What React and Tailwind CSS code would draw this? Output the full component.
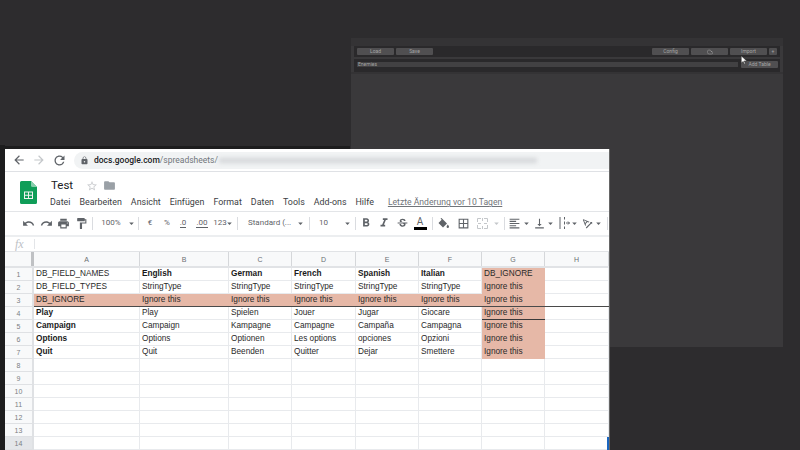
import {
  MdArrowBack,
  MdArrowForward,
  MdRefresh,
  MdLock,
  MdStarBorder,
  MdFolder,
  MdUndo,
  MdRedo,
  MdPrint,
  MdFormatPaint,
  MdArrowDropDown,
  MdFormatBold,
  MdFormatItalic,
  MdStrikethroughS,
  MdBorderAll,
  MdFormatAlignLeft,
  MdVerticalAlignBottom,
  MdTextRotationAngleup,
} from "react-icons/md";
import { FiCloud } from "react-icons/fi";

const columns = [
  { name: "A", w: "w-[106px]" },
  { name: "B", w: "w-[89px]" },
  { name: "C", w: "w-[63px]" },
  { name: "D", w: "w-[64px]" },
  { name: "E", w: "w-[63px]" },
  { name: "F", w: "w-[63px]" },
  { name: "G", w: "w-[63px]" },
  { name: "H", w: "w-[64px]" },
];

const rows = [
  ["DB_FIELD_NAMES", "English", "German", "French", "Spanish", "Italian", "DB_IGNORE", ""],
  ["DB_FIELD_TYPES", "StringType", "StringType", "StringType", "StringType", "StringType", "Ignore this", ""],
  ["DB_IGNORE", "Ignore this", "Ignore this", "Ignore this", "Ignore this", "Ignore this", "Ignore this", ""],
  ["Play", "Play", "Spielen", "Jouer", "Jugar", "Giocare", "Ignore this", ""],
  ["Campaign", "Campaign", "Kampagne", "Campagne", "Campaña", "Campagna", "Ignore this", ""],
  ["Options", "Options", "Optionen", "Les options", "opciones", "Opzioni", "Ignore this", ""],
  ["Quit", "Quit", "Beenden", "Quitter", "Dejar", "Smettere", "Ignore this", ""],
  ["", "", "", "", "", "", "", ""],
  ["", "", "", "", "", "", "", ""],
  ["", "", "", "", "", "", "", ""],
  ["", "", "", "", "", "", "", ""],
  ["", "", "", "", "", "", "", ""],
  ["", "", "", "", "", "", "", ""],
  ["", "", "", "", "", "", "", ""],
];

function UnityButton({ children, className }) {
  return (
    <div
      className={`h-[7px] shrink-0 flex items-center justify-center rounded-[1px] bg-[#504f51] text-[5px] leading-none text-[#a5a5a5] ${className}`}
    >
      {children}
    </div>
  );
}

function UnityPanel() {
  return (
    <div className="absolute left-[351px] top-[38px] w-[432px] h-[309px] bg-[#3a393b]">
      <div className="h-[8px] bg-[#343335]" />
      <div className="mx-[3px] h-[11px] bg-[#2a292b] flex items-center px-[3px] gap-[2px]">
        <UnityButton className="w-[37px]">Load</UnityButton>
        <UnityButton className="w-[37px]">Save</UnityButton>
        <div className="flex-1" />
        <UnityButton className="w-[37px]">Config</UnityButton>
        <UnityButton className="w-[37px]">
          <FiCloud className="text-[6px]" />
        </UnityButton>
        <UnityButton className="w-[37px]">Import</UnityButton>
        <UnityButton className="w-[8px]">+</UnityButton>
      </div>
      <div className="mx-[3px] mt-[2px] h-[13px] bg-[#2a292b] flex items-start pt-[2px] pl-[3px] gap-[3px]">
        <div className="w-[381px] h-[5px] mt-px shrink-0 bg-[#424143] flex items-center px-[1px] text-[5px] leading-none text-[#a5a5a5]">
          Enemies
        </div>
        <UnityButton className="w-[37px]">Add Table</UnityButton>
      </div>
      <div className="h-[2px] bg-[#343335]" />
      {/* cursor */}
      <svg className="absolute left-[390px] top-[18px] w-[6px] h-[8px]" viewBox="0 0 6 9">
        <path d="M0 0v8l2-2 1.5 3 1-.5L3 5.5h3z" fill="#fff" stroke="#222" strokeWidth="0.4" />
      </svg>
    </div>
  );
}

function AddressBar() {
  return (
    <div className="h-[23px] flex items-center border-b border-[#dfe1e5] bg-white">
      <MdArrowBack className="ml-[7px] text-[14px] text-[#5f6368]" />
      <MdArrowForward className="ml-[6px] text-[14px] text-[#c4c7ca]" />
      <MdRefresh className="ml-[6px] text-[15px] text-[#5f6368]" />
      <div className="ml-[7px] flex-1 h-[17px] rounded-l-full bg-[#f1f3f4] flex items-center pl-[6px]">
        <MdLock className="text-[9px] text-[#5f6368]" />
        <span className="ml-[5px] text-[8.5px] font-medium leading-none text-[#202124]">docs.google.com</span>
        <span className="text-[8.5px] leading-none text-[#70757a]">/spreadsheets/</span>
        <div className="ml-[1px] w-[318px] h-[5px] bg-[#d4d6d9] blur-[2px]" />
      </div>
    </div>
  );
}

function SheetsLogo() {
  return (
    <svg className="w-[17px] h-[23px]" viewBox="0 0 17 23">
      <path d="M1.5 0H11l6 6v15.5a1.5 1.5 0 0 1-1.5 1.5h-14A1.5 1.5 0 0 1 0 21.500V1.500A1.500 1.500 0 0 1 1.500 0z" fill="#0f9d58" />
      <path d="M11 0l6 6h-4.500A1.500 1.500 0 0 1 11 4.500z" fill="#87ceac" />
      <path d="M4 10.500h9V18H4zM5 11.500v2.200h3v-2.200zm4 0v2.200h3v-2.200zM5 14.700V17h3v-2.300zm4 0V17h3v-2.300z" fill="#f1f1f1" fillRule="evenodd" />
    </svg>
  );
}

function TitleBar() {
  const menu = ["Datei", "Bearbeiten", "Ansicht", "Einfügen", "Format", "Daten", "Tools", "Add-ons", "Hilfe"];
  return (
    <div className="h-[40px] flex bg-white border-b border-[#e3e5e8]">
      <div className="ml-[15px] mt-[9px]">
        <SheetsLogo />
      </div>
      <div className="ml-[13px] pt-[5px]">
        <div className="flex items-center h-[17px] pl-[1px]">
          <span className="text-[11.5px] leading-none text-[#202124]">Test</span>
          <MdStarBorder className="ml-[13px] text-[12px] text-[#c9cbce]" />
          <MdFolder className="ml-[5px] text-[13px] text-[#9aa0a6]" />
        </div>
        <div className="flex items-center h-[15px] mt-[1px] gap-[9px] text-[8.9px] leading-none text-[#3c4043] whitespace-nowrap">
          {menu.map((m) => (
            <span key={m}>{m}</span>
          ))}
          <span className="ml-[5px] text-[8.65px] underline text-[#70757a]">Letzte Änderung vor 10 Tagen</span>
        </div>
      </div>
    </div>
  );
}

// toolbar items sit in fixed width slots, the widths come from the reference
function Slot({ w, children, className = "" }) {
  return <div className={`${w} shrink-0 flex items-center justify-center ${className}`}>{children}</div>;
}

function Sep({ w }) {
  return (
    <Slot w={w}>
      <div className="w-px h-[13px] shrink-0 bg-[#dadce0]" />
    </Slot>
  );
}

function Caret({ w, light }) {
  return (
    <Slot w={w}>
      <MdArrowDropDown className={`shrink-0 text-[11px] ${light ? "text-[#c4c7ca]" : "text-[#5f6368]"}`} />
    </Slot>
  );
}

function Toolbar() {
  return (
    <div className="h-[25px] pb-[1px] flex items-center bg-white border-b-2 border-[#eceef0] text-[#5f6368] text-[8px] leading-none whitespace-nowrap overflow-hidden">
      <div className="w-[14px] shrink-0" />
      <Slot w="w-[18px]"><MdUndo className="text-[13px]" /></Slot>
      <Slot w="w-[18px]"><MdRedo className="text-[13px]" /></Slot>
      <Slot w="w-[17px]"><MdPrint className="text-[13px]" /></Slot>
      <Slot w="w-[18px]"><MdFormatPaint className="text-[13px]" /></Slot>
      <Sep w="w-[4px]" />
      <Slot w="w-[34px]">100%</Slot>
      <Caret w="w-[6px]" />
      <Sep w="w-[8px]" />
      <Slot w="w-[16px]">€</Slot>
      <Slot w="w-[18px]">%</Slot>
      <Slot w="w-[14px]"><span className="border-b border-[#5f6368]">.0</span></Slot>
      <Slot w="w-[24px]"><span className="border-b border-[#5f6368]">.00</span></Slot>
      <Slot w="w-[12px]">123</Slot>
      <Caret w="w-[6px]" />
      <Sep w="w-[10px]" />
      <Slot w="w-[54px]" className="pl-[6px] !justify-start">Standard (...</Slot>
      <Caret w="w-[8px]" />
      <Sep w="w-[10px]" />
      <Slot w="w-[27px]" className="pl-[5px] !justify-start">10</Slot>
      <Caret w="w-[12px]" />
      <Sep w="w-[4px]" />
      <Slot w="w-[18px]"><MdFormatBold className="text-[14px]" /></Slot>
      <Slot w="w-[18px]"><MdFormatItalic className="text-[14px]" /></Slot>
      <Slot w="w-[18px]"><MdStrikethroughS className="text-[13px]" /></Slot>
      <Slot w="w-[18px]">
        <div className="flex flex-col items-center w-[13px]">
          <span className="text-[10px] leading-[10px]">A</span>
          <div className="w-[13px] h-[3px] bg-black" />
        </div>
      </Slot>
      <Sep w="w-[6px]" />
      <Slot w="w-[18px]">
        <svg className="w-[12px] h-[11px]" viewBox="0 0 12 11" fill="#5f6368">
          <path d="M2.500 0.500l1-.5 5.500 5.500-4 4-4.500-4.500 3.200-3.200zM9.800 6.500c.7 1 1.200 1.700 1.200 2.300a1.200 1.200 0 0 1-2.400 0c0-.6.500-1.300 1.200-2.300z" />
        </svg>
      </Slot>
      <Slot w="w-[20px]"><MdBorderAll className="text-[13px]" /></Slot>
      <Slot w="w-[18px]">
        <svg className="w-[11px] h-[11px]" viewBox="0 0 11 11" fill="none" stroke="#c4c7ca" strokeWidth="1">
          <path d="M.5 4V.5H4M7 .5h3.500V4M.5 7v3.500H4M7 10.500h3.500V7M5.500 0v3M5.500 8v3M1 5.500h3M7 5.500h3" />
        </svg>
      </Slot>
      <Caret w="w-[10px]" light />
      <Sep w="w-[6px]" />
      <Slot w="w-[15px]"><MdFormatAlignLeft className="text-[13px]" /></Slot>
      <Caret w="w-[8px]" />
      <Slot w="w-[18px]"><MdVerticalAlignBottom className="text-[13px]" /></Slot>
      <Caret w="w-[5px]" />
      <div className="w-[6px] shrink-0" />
      <Slot w="w-[11px]">
        <svg className="w-[11px] h-[12px]" viewBox="0 0 11 12" fill="none" stroke="#5f6368" strokeWidth="1">
          <path d="M1 0v12M5.500 0v2.500M5.500 4.500v3M5.500 9.500V12M7 6h3.500M9 4.500L10.500 6 9 7.500" />
        </svg>
      </Slot>
      <Caret w="w-[8px]" />
      <Slot w="w-[18px]"><MdTextRotationAngleup className="text-[13px]" /></Slot>
      <Caret w="w-[4px]" />
      <Sep w="w-[14px]" />
    </div>
  );
}

function FormulaBar() {
  return (
    <div className="h-[14px] flex items-center bg-white">
      <span className="ml-[10px] w-[19px] font-['Liberation_Serif',serif] italic text-[12px] leading-none text-[#bdc1c6]">
        fx
      </span>
      <div className="w-px h-[10px] bg-[#e3e5e8]" />
    </div>
  );
}

function Grid() {
  return (
    <div className="relative font-['Liberation_Sans',Arial,sans-serif]">
      <div className="flex h-[17px] bg-[#f8f9fa] border-t border-b-2 border-[#e1e3e6]">
        <div className="w-[29px] border-r-[3px] border-[#bfc1c4]" />
        {columns.map((c) => (
          <div
            key={c.name}
            className={`${c.w} flex items-center justify-center border-r border-[#d5d7da] text-[7px] leading-none text-[#6b6f73]`}
          >
            {c.name}
          </div>
        ))}
      </div>
      {rows.map((row, r) => (
        <div key={r} className="flex h-[13px]">
          <div
            className={`w-[29px] flex items-center justify-center border-r-[2px] border-b border-[#dfe1e4] text-[7px] leading-none text-[#7b7f83] ${
              r === 13 ? "bg-[#e4e6e9]" : "bg-[#f8f9fa]"
            }`}
          >
            {r + 1}
          </div>
          {row.map((cell, c) => {
            const shaded = r === 2 ? c < 7 : c === 6 && r < 7;
            const bold = (r === 0 && c > 0 && c < 6) || (r > 2 && r < 7 && c === 0);
            return (
              <div
                key={c}
                className={`${columns[c].w} flex items-center pl-[2px] text-[8.25px] leading-none whitespace-nowrap overflow-hidden border-r border-b ${
                  shaded ? "bg-[#e6b8a7] border-[#e6b8a7]" : "bg-white border-[#e8eaed]"
                } ${bold ? "font-bold text-[#1a1a1a]" : "text-[#2a2a2a]"}`}
              >
                {cell}
              </div>
            );
          })}
        </div>
      ))}
      {/* frozen row line and selection edge */}
      <div className="absolute left-[29px] right-0 top-[55px] h-px bg-[#4a4a4a]" />
      <div className="absolute left-[477px] w-[63px] top-[68px] h-px bg-[#3a3a3a]" />
      <div className="absolute right-0 bottom-0 w-[2px] h-[13px] bg-[#1a66c0]" />
    </div>
  );
}

export default function App() {
  return (
    <div className="relative w-[800px] h-[450px] overflow-hidden bg-[#2d2c2e] font-['Roboto',Arial,sans-serif]">
      <UnityPanel />
      <div className="absolute left-0 top-[145px] w-[5px] h-[305px] bg-[#1d1d1e]" />
      <div className="absolute left-0 top-[146px] w-[350px] h-[3px] bg-[#1d1d1e]" />
      <div className="absolute left-[5px] top-[149px] w-[605px] h-[301px] bg-white border-r border-[#666] overflow-hidden">
        <AddressBar />
        <TitleBar />
        <Toolbar />
        <FormulaBar />
        <Grid />
      </div>
    </div>
  );
}
